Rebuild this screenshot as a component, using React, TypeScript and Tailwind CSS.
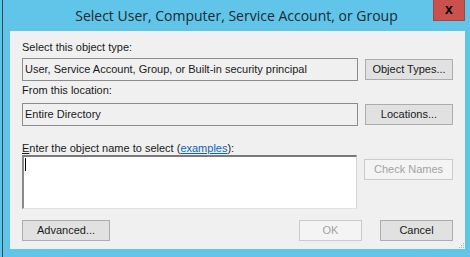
import React from "react";

const ui = { fontFamily: '"Liberation Sans", Arial, sans-serif' };
const title = { fontFamily: '"Open Sans", "Noto Sans", sans-serif' };

const Button = ({ label, w, disabled }: { label: string; w: string; disabled?: boolean }) => (
  <button
    className={`${w} h-[21px] border text-[11px] leading-none ${
      disabled ? "border-[#cacaca] bg-[#f4f4f4] text-[#a3a3a3]" : "border-[#acacac] bg-[#e1e1e1] text-[#1a1a1a]"
    }`}
    style={ui}
  >
    {label}
  </button>
);

const ReadBox = ({ text }: { text: string }) => (
  <div className="w-[336px] h-[23px] border border-[#8c8c8c] bg-[#f0f0f0] flex items-center px-[2px] text-[11px] text-[#1a1a1a]">
    {text}
  </div>
);

export default function App() {
  return (
    <div className="w-[470px] h-[257px] bg-[#5cc6ea] overflow-hidden" style={ui}>
      <div className="h-full ml-[2px] border-l border-[#3b4a52] bg-[#60c5e8] flex flex-col">
        {/* title bar */}
        <div className="h-[31px] flex items-start relative">
          <div className="flex-1 text-center pt-[5px] text-[14px] text-[#1c2a30]" style={title}>
            Select User, Computer, Service Account, or Group
          </div>
          <div className="absolute left-[430px] top-0 w-[32px] h-[21px] bg-[#c9524f] border border-[#a84440] border-t-0 flex items-center justify-center text-[14px] font-bold text-black leading-none pb-[2px]">
            x
          </div>
        </div>

        {/* body */}
        <div className="ml-[7px] mr-[5px] h-[218px] bg-[#f0f0f0] px-[12px] flex flex-col relative text-[#1a1a1a]">
          <div className="mt-[9px] text-[11px] leading-[14px]">Select this object type:</div>
          <div className="mt-[4px] flex items-center justify-between">
            <ReadBox text="User, Service Account, Group, or Built-in security principal" />
            <Button label="Object Types..." w="w-[88px]" />
          </div>

          <div className="mt-[2px] text-[11px] leading-[14px]">From this location:</div>
          <div className="mt-[6px] flex items-center justify-between">
            <ReadBox text="Entire Directory" />
            <Button label="Locations..." w="w-[88px]" />
          </div>

          <div className="mt-[15px] text-[11px] leading-[14px]">
            <span className="underline">E</span>nter the object name to select (
            <span className="text-[#0b63c5] underline">examples</span>):
          </div>
          <div className="flex items-start justify-between">
            <div className="w-[335px] h-[54px] bg-white border-t-2 border-l-2 border-t-[#7a7a7a] border-l-[#8a8a8a] border-r border-b border-r-[#d8d8d8] border-b-[#e3e3e3] pl-[1px] pt-[1px]">
              <div className="w-px h-[13px] bg-black" />
            </div>
            <div className="mt-[1px]">
              <Button label="Check Names" w="w-[89px]" disabled />
            </div>
          </div>

          <div className="mt-[11px] flex items-center">
            <Button label="Advanced..." w="w-[88px]" />
            <div className="flex-1" />
            <Button label="OK" w="w-[63px]" disabled />
            <div className="w-[18px]" />
            <Button label="Cancel" w="w-[73px]" />
          </div>

          {/* size grip */}
          <div className="absolute right-[1px] bottom-[1px] grid grid-cols-3 gap-[1px]">
            {[0, 0, 1, 0, 1, 1, 1, 1, 1].map((v, i) => (
              <div key={i} className={`w-[1px] h-[1px] ${v ? "bg-[#b5b5b5]" : "bg-transparent"}`} />
            ))}
          </div>
        </div>
      </div>
    </div>
  );
}
